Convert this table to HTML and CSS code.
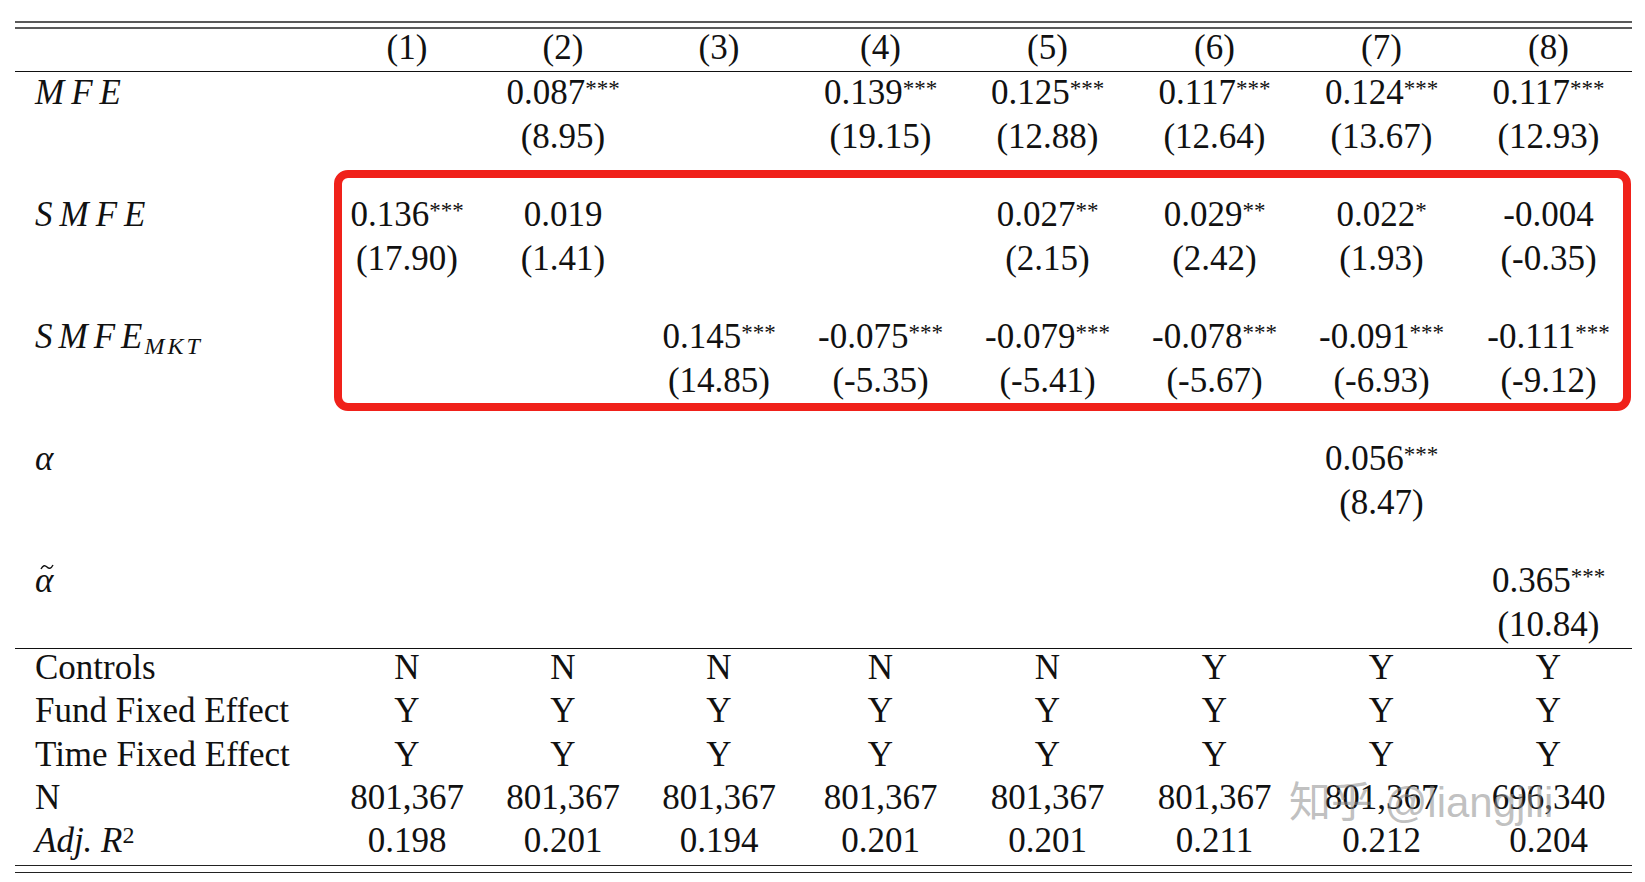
FILE: index.html
```html
<!DOCTYPE html>
<html lang="en">
<head>
<meta charset="utf-8">
<title>Regression table</title>
<link rel="stylesheet" href="styles.css">
</head>
<body>
<div class="page">
  <div class="table">
    <div class="rule-top"></div>
    <div class="rule-top second"></div>

    <div class="row head">
      <div class="label"></div>
      <div class="cell">(1)</div>
      <div class="cell">(2)</div>
      <div class="cell">(3)</div>
      <div class="cell">(4)</div>
      <div class="cell">(5)</div>
      <div class="cell">(6)</div>
      <div class="cell">(7)</div>
      <div class="cell">(8)</div>
    </div>
    <div class="rule-mid"></div>

    <div class="row block">
      <div class="label"><div class="line"><i class="math">MFE</i></div></div>
      <div class="cell"></div>
      <div class="cell"><div class="line">0.087<sup class="s">***</sup></div><div class="line">(8.95)</div></div>
      <div class="cell"></div>
      <div class="cell"><div class="line">0.139<sup class="s">***</sup></div><div class="line">(19.15)</div></div>
      <div class="cell"><div class="line">0.125<sup class="s">***</sup></div><div class="line">(12.88)</div></div>
      <div class="cell"><div class="line">0.117<sup class="s">***</sup></div><div class="line">(12.64)</div></div>
      <div class="cell"><div class="line">0.124<sup class="s">***</sup></div><div class="line">(13.67)</div></div>
      <div class="cell"><div class="line">0.117<sup class="s">***</sup></div><div class="line">(12.93)</div></div>
    </div>

    <div class="row block">
      <div class="label"><div class="line"><i class="math">SMFE</i></div></div>
      <div class="cell"><div class="line">0.136<sup class="s">***</sup></div><div class="line">(17.90)</div></div>
      <div class="cell"><div class="line">0.019</div><div class="line">(1.41)</div></div>
      <div class="cell"></div>
      <div class="cell"></div>
      <div class="cell"><div class="line">0.027<sup class="s">**</sup></div><div class="line">(2.15)</div></div>
      <div class="cell"><div class="line">0.029<sup class="s">**</sup></div><div class="line">(2.42)</div></div>
      <div class="cell"><div class="line">0.022<sup class="s">*</sup></div><div class="line">(1.93)</div></div>
      <div class="cell"><div class="line">-0.004</div><div class="line">(-0.35)</div></div>
    </div>

    <div class="row block">
      <div class="label"><div class="line"><i class="math mk">SMFE</i><sub class="sub">MKT</sub></div></div>
      <div class="cell"></div>
      <div class="cell"></div>
      <div class="cell"><div class="line">0.145<sup class="s">***</sup></div><div class="line">(14.85)</div></div>
      <div class="cell"><div class="line">-0.075<sup class="s">***</sup></div><div class="line">(-5.35)</div></div>
      <div class="cell"><div class="line">-0.079<sup class="s">***</sup></div><div class="line">(-5.41)</div></div>
      <div class="cell"><div class="line">-0.078<sup class="s">***</sup></div><div class="line">(-5.67)</div></div>
      <div class="cell"><div class="line">-0.091<sup class="s">***</sup></div><div class="line">(-6.93)</div></div>
      <div class="cell"><div class="line">-0.111<sup class="s">***</sup></div><div class="line">(-9.12)</div></div>
    </div>

    <div class="row block">
      <div class="label"><div class="line"><i class="greek">α</i></div></div>
      <div class="cell"></div>
      <div class="cell"></div>
      <div class="cell"></div>
      <div class="cell"></div>
      <div class="cell"></div>
      <div class="cell"></div>
      <div class="cell"><div class="line">0.056<sup class="s">***</sup></div><div class="line">(8.47)</div></div>
      <div class="cell"></div>
    </div>

    <div class="row block last">
      <div class="label"><div class="line"><i class="greek tilde">α<svg class="tl" width="14" height="6" viewBox="0 0 14 6"><path d="M1 5 C3 1 5 1 7 3 C9 5 11 5 13 1" fill="none" stroke="#111" stroke-width="1.4"/></svg></i></div></div>
      <div class="cell"></div>
      <div class="cell"></div>
      <div class="cell"></div>
      <div class="cell"></div>
      <div class="cell"></div>
      <div class="cell"></div>
      <div class="cell"></div>
      <div class="cell"><div class="line">0.365<sup class="s">***</sup></div><div class="line">(10.84)</div></div>
    </div>

    <div class="rule-mid"></div>

    <div class="row stat">
      <div class="label">Controls</div>
      <div class="cell">N</div><div class="cell">N</div><div class="cell">N</div><div class="cell">N</div>
      <div class="cell">N</div><div class="cell">Y</div><div class="cell">Y</div><div class="cell">Y</div>
    </div>
    <div class="row stat">
      <div class="label">Fund Fixed Effect</div>
      <div class="cell">Y</div><div class="cell">Y</div><div class="cell">Y</div><div class="cell">Y</div>
      <div class="cell">Y</div><div class="cell">Y</div><div class="cell">Y</div><div class="cell">Y</div>
    </div>
    <div class="row stat">
      <div class="label">Time Fixed Effect</div>
      <div class="cell">Y</div><div class="cell">Y</div><div class="cell">Y</div><div class="cell">Y</div>
      <div class="cell">Y</div><div class="cell">Y</div><div class="cell">Y</div><div class="cell">Y</div>
    </div>
    <div class="row stat">
      <div class="label">N</div>
      <div class="cell">801,367</div><div class="cell">801,367</div><div class="cell">801,367</div><div class="cell">801,367</div>
      <div class="cell">801,367</div><div class="cell">801,367</div><div class="cell">801,367</div><div class="cell">696,340</div>
    </div>
    <div class="row stat">
      <div class="label"><i class="adj">Adj.</i> <i class="adj">R</i><sup class="sq">2</sup></div>
      <div class="cell">0.198</div><div class="cell">0.201</div><div class="cell">0.194</div><div class="cell">0.201</div>
      <div class="cell">0.201</div><div class="cell">0.211</div><div class="cell">0.212</div><div class="cell">0.204</div>
    </div>

    <div class="rule-bot"></div>
    <div class="rule-bot second"></div>
  </div>

  <div class="highlight"></div>
  <div class="watermark">知乎 @liangjili</div>
</div>
</body>
</html>
```

FILE: styles.css
```css
html, body {
  margin: 0;
  padding: 0;
  background: #ffffff;
}

body {
  font-family: "Liberation Serif", "Times New Roman", serif;
  font-size: 35px;
  color: #111111;
}

.page {
  position: relative;
  width: 1645px;
  height: 882px;
  overflow: hidden;
  padding: 21px 0 0 15px;
  box-sizing: border-box;
}

.table {
  width: 1617px;
}

.rule-top {
  height: 2px;
  background: #5a5a5a;
}
.rule-top.second {
  margin-top: 4px;
}

.rule-mid {
  height: 1px;
  background: #111111;
}

.rule-bot {
  height: 1px;
  background: #222222;
}
.rule-bot.second {
  margin-top: 6px;
}

.row {
  display: grid;
  grid-template-columns: 314px repeat(3, 156px) repeat(5, 167px);
  white-space: nowrap;
}

.label {
  padding-left: 20px;
  text-align: left;
}

.cell {
  text-align: center;
}

.head {
  height: 42px;
  line-height: 37px;
}

.block {
  padding-bottom: 34px;
}
.block.last {
  padding-bottom: 0;
}

.line {
  height: 44px;
  line-height: 41px;
}

.stat {
  height: 43.25px;
  line-height: 38px;
}

.s {
  font-size: 23px;
  vertical-align: 8px;
  line-height: 0;
}

.math {
  font-style: italic;
  letter-spacing: 7px;
}
.math.mk {
  letter-spacing: 6px;
}

.sub {
  font-style: italic;
  font-size: 24px;
  letter-spacing: 3px;
  vertical-align: -6px;
  line-height: 0;
  margin-left: -4px;
}

.greek {
  font-style: italic;
}

.tilde {
  position: relative;
  display: inline-block;
}
.tl {
  position: absolute;
  left: 5px;
  top: 4px;
}

.adj {
  font-style: italic;
}

.sq {
  font-size: 24px;
  vertical-align: 9px;
  line-height: 0;
}

.highlight {
  position: absolute;
  left: 334px;
  top: 170px;
  width: 1297px;
  height: 241px;
  box-sizing: border-box;
  border: 8px solid #f0211a;
  border-radius: 14px;
}

.watermark {
  position: absolute;
  left: 1289px;
  top: 778px;
  font-family: "Liberation Sans", "Noto Sans CJK SC", sans-serif;
  font-size: 42px;
  line-height: 50px;
  color: rgba(140, 140, 140, 0.55);
  white-space: nowrap;
}
```
